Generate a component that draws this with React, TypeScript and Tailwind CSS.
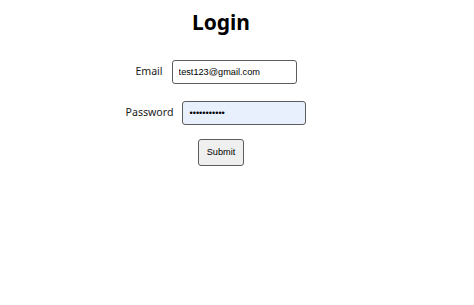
export default function App() {
  return (
    <div className="min-h-[305px] w-[474px] bg-white">
      <div className="flex w-[442px] flex-col items-center">
        <h1 className="mt-[8px] font-['Noto_Sans',sans-serif] text-[21px] font-bold leading-[28px] text-black">
          Login
        </h1>

        <form className="flex flex-col items-center" onSubmit={(e) => e.preventDefault()}>
          <div className="mt-[24px] mr-[10px] flex items-center gap-[9px]">
            <label className="font-['Noto_Sans',sans-serif] text-[10.6px] text-[#1a1a1a]">Email</label>
            <input
              type="email"
              defaultValue="test123@gmail.com"
              className="h-[24px] w-[125px] rounded-[3px] border-[1.5px] border-[#5c5c5c] bg-white pl-[6px] font-['Liberation_Sans',Arial,sans-serif] text-[9.2px] text-black outline-none"
            />
          </div>

          <div className="mt-[17px] mr-[10px] flex items-center gap-[9px]">
            <label className="font-['Noto_Sans',sans-serif] text-[10.6px] text-[#1a1a1a]">Password</label>
            <input
              type="password"
              defaultValue="password123"
              className="h-[24px] w-[124px] rounded-[3px] border-[1.5px] border-[#5c5c5c] bg-[#e8f0fe] pl-[6px] font-['Liberation_Sans',Arial,sans-serif] text-[9.2px] text-black outline-none"
            />
          </div>

          <button
            type="submit"
            className="mt-[14px] h-[27px] w-[46px] rounded-[3px] border-[1.5px] border-[#5c5c5c] bg-[#efefef] font-['Liberation_Sans',Arial,sans-serif] text-[9.2px] text-black"
          >
            Submit
          </button>
        </form>
      </div>
    </div>
  )
}
